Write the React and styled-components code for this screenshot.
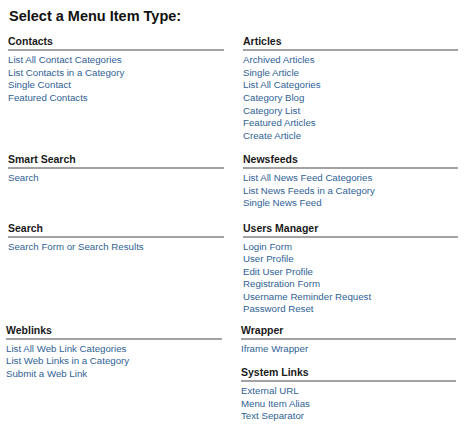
import React from "react";
import styled, { createGlobalStyle } from "styled-components";

const GlobalStyle = createGlobalStyle`
	body {
		margin: 0;
		background: #ffffff;
		font-family: "Liberation Sans", Arial, sans-serif;
	}
`;

const Page = styled.div`
	width: 474px;
	height: 439px;
	padding: 6.5px 16px 0 8px;
	box-sizing: border-box;
	overflow: hidden;
`;

const Title = styled.h1`
	margin: 0 0 10.8px 1px;
	font-size: 14.5px;
	line-height: 18px;
	font-weight: bold;
	color: #111111;
`;

const Row = styled.div`
	display: grid;
	grid-template-columns: 216px 215px;
	column-gap: 19px;
	margin-left: ${(p) => (p.$nudge ? "-2px" : "0")};
	margin-bottom: ${(p) => p.$gap || "11.5px"};
`;

const Column = styled.div`
	display: flex;
	flex-direction: column;
	gap: 10.8px;
`;

const Section = styled.div`
	display: flex;
	flex-direction: column;
`;

const Heading = styled.h2`
	margin: 0;
	padding-bottom: 1px;
	border-bottom: 2px solid #a3a3a3;
	font-size: 10.5px;
	line-height: 13px;
	font-weight: bold;
	color: #1a1a1a;
`;

const Links = styled.ul`
	list-style: none;
	margin: 3px 0 0;
	padding: 0;
`;

const Link = styled.a`
	display: block;
	font-size: 9.7px;
	line-height: 12.6px;
	color: #2f5f95;
	text-decoration: none;
	cursor: pointer;
	&:hover {
		text-decoration: underline;
	}
`;

const rows = [
	{
		gap: "10.7px",
		cols: [
			[{ title: "Contacts", items: ["List All Contact Categories", "List Contacts in a Category", "Single Contact", "Featured Contacts"] }],
			[{ title: "Articles", items: ["Archived Articles", "Single Article", "List All Categories", "Category Blog", "Category List", "Featured Articles", "Create Article"] }],
		],
	},
	{
		gap: "11.6px",
		cols: [
			[{ title: "Smart Search", items: ["Search"] }],
			[{ title: "Newsfeeds", items: ["List All News Feed Categories", "List News Feeds in a Category", "Single News Feed"] }],
		],
	},
	{
		gap: "7.6px",
		cols: [
			[{ title: "Search", items: ["Search Form or Search Results"] }],
			[{ title: "Users Manager", items: ["Login Form", "User Profile", "Edit User Profile", "Registration Form", "Username Reminder Request", "Password Reset"] }],
		],
	},
	{
		nudge: true,
		cols: [
			[{ title: "Weblinks", items: ["List All Web Link Categories", "List Web Links in a Category", "Submit a Web Link"] }],
			[
				{ title: "Wrapper", items: ["Iframe Wrapper"] },
				{ title: "System Links", items: ["External URL", "Menu Item Alias", "Text Separator"] },
			],
		],
	},
];

const App = () => {
	return (
		<>
			<GlobalStyle />
			<Page>
				<Title>Select a Menu Item Type:</Title>
				{rows.map((row, i) => (
					<Row key={i} $gap={row.gap} $nudge={row.nudge}>
						{row.cols.map((col, j) => (
							<Column key={j}>
								{col.map((section) => (
									<Section key={section.title}>
										<Heading>{section.title}</Heading>
										<Links>
											{section.items.map((item) => (
												<li key={item}>
													<Link href="#">{item}</Link>
												</li>
											))}
										</Links>
									</Section>
								))}
							</Column>
						))}
					</Row>
				))}
			</Page>
		</>
	);
};

export default App;
